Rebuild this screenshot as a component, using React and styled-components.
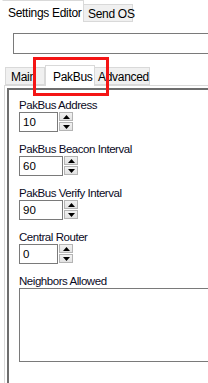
import React from "react";
import styled, { createGlobalStyle } from "styled-components";

const GlobalStyle = createGlobalStyle`
  html, body {
    margin: 0;
    padding: 0;
    background: #fff;
  }
  body {
    font-family: "Liberation Sans", Arial, sans-serif;
    font-size: 11px;
    color: #000;
  }
`;

const Window = styled.div`
  width: 208px;
  height: 383px;
  overflow: hidden;
  display: flex;
  flex-direction: column;
  background: #fff;
`;

const TopTabs = styled.div`
  display: flex;
  align-items: flex-end;
  height: 22px;
  padding-left: 2px;
  flex-shrink: 0;
`;

const TopTab = styled.div`
  box-sizing: border-box;
  width: ${(p) => p.$w}px;
  height: ${(p) => (p.$active ? 22 : 18)}px;
  display: flex;
  align-items: center;
  padding-left: ${(p) => (p.$active ? 5 : 4)}px;
  padding-top: ${(p) => (p.$active ? 2 : 1)}px;
  font-size: 12px;
  letter-spacing: -0.3px;
  white-space: nowrap;
  background: ${(p) => (p.$active ? "#fff" : "#f0f0f0")};
  border: 1px solid #d9d9d9;
  border-bottom: ${(p) => (p.$active ? "none" : "1px solid #d9d9d9")};
  border-left: ${(p) => (p.$active ? "1px solid #fff" : "none")};
`;

const PathRow = styled.div`
  padding: 11px 0 0 13px;
  flex-shrink: 0;
`;

const PathInput = styled.div`
  box-sizing: border-box;
  width: 230px;
  height: 21px;
  border: 1px solid #7a7a7a;
  background: #fff;
`;

const InnerTabs = styled.div`
  display: flex;
  align-items: flex-end;
  margin-top: 11px;
  margin-left: 4px;
  padding-left: 1px;
  height: 20px;
  border-bottom: 1px solid #d9d9d9;
  flex-shrink: 0;
`;

const InnerTab = styled.div`
  position: relative;
  box-sizing: border-box;
  width: ${(p) => p.$w}px;
  height: ${(p) => (p.$active ? 21 : 18)}px;
  margin-bottom: ${(p) => (p.$active ? -1 : 0)}px;
  display: flex;
  align-items: center;
  padding-left: ${(p) => p.$pad}px;
  padding-top: 1px;
  font-size: 12px;
  letter-spacing: -0.3px;
  white-space: nowrap;
  background: ${(p) => (p.$active ? "#fff" : "#f0f0f0")};
  border: 1px solid #d9d9d9;
  border-bottom: ${(p) => (p.$active ? "none" : "1px solid #d9d9d9")};
  border-left: ${(p) => (p.$first || p.$active ? "1px solid #d9d9d9" : "none")};
  z-index: ${(p) => (p.$active ? 1 : 0)};
`;

const Highlight = styled.div`
  position: absolute;
  left: -13px;
  top: -9px;
  width: 76px;
  height: 39px;
  box-sizing: border-box;
  border: 3px solid #f41515;
  pointer-events: none;
  z-index: 2;
`;

const TabPanel = styled.div`
  flex: 1;
  margin-left: 4px;
  border-left: 1px solid #d9d9d9;
  padding: 2px 0 0 2px;
  display: flex;
`;

const ScrollPanel = styled.div`
  flex: 1;
  border-left: 2px solid #6e6e6e;
  border-top: 2px solid #6e6e6e;
  padding: 9px 0 0 10px;
  display: flex;
  flex-direction: column;
  gap: 11px;
`;

const Field = styled.div`
  display: flex;
  flex-direction: column;
`;

const Label = styled.div`
  height: 13px;
  line-height: 13px;
  font-size: 11.5px;
  letter-spacing: -0.45px;
  color: #0a0a1e;
  white-space: nowrap;
`;

const SpinRow = styled.div`
  display: flex;
  gap: 1px;
`;

const NumberBox = styled.div`
  box-sizing: border-box;
  width: ${(p) => p.$w}px;
  height: 20px;
  border: 1px solid #7a7a7a;
  padding-left: 3px;
  line-height: 18px;
  font-size: 11.5px;
  background: #fff;
`;

const Spinner = styled.div`
  display: flex;
  flex-direction: column;
  gap: 1px;
  width: 14px;
`;

const SpinButton = styled.div`
  box-sizing: border-box;
  height: 9px;
  border: 1px solid #b4b4b4;
  background: linear-gradient(#f2f2f2, #e2e2e2);
  display: flex;
  align-items: center;
  justify-content: center;
`;

const ListBox = styled.div`
  box-sizing: border-box;
  width: 220px;
  height: 74px;
  border: 1px solid #7a7a7a;
  background: #fff;
`;

const Arrow = ({ up }) => (
  <svg width="7" height="4" viewBox="0 0 7 4">
    <polygon points={up ? "0,4 7,4 3.5,0" : "0,0 7,0 3.5,4"} fill="#000" />
  </svg>
);

const NumberField = ({ label, value, width }) => (
  <Field>
    <Label>{label}</Label>
    <SpinRow>
      <NumberBox $w={width}>{value}</NumberBox>
      <Spinner>
        <SpinButton>
          <Arrow up />
        </SpinButton>
        <SpinButton>
          <Arrow />
        </SpinButton>
      </Spinner>
    </SpinRow>
  </Field>
);

const fields = [
  { label: "PakBus Address", value: "10", width: 39 },
  { label: "PakBus Beacon Interval", value: "60", width: 44 },
  { label: "PakBus Verify Interval", value: "90", width: 44 },
  { label: "Central Router", value: "0", width: 39 },
];

export default function App() {
  return (
    <Window>
      <GlobalStyle />
      <TopTabs>
        <TopTab $active $w={82}>Settings Editor</TopTab>
        <TopTab $w={49}>Send OS</TopTab>
      </TopTabs>
      <PathRow>
        <PathInput />
      </PathRow>
      <InnerTabs>
        <InnerTab $first $w={40} $pad={5}>Main</InnerTab>
        <InnerTab $active $w={50} $pad={7}>
          PakBus
          <Highlight />
        </InnerTab>
        <InnerTab $w={55} $pad={3}>Advanced</InnerTab>
      </InnerTabs>
      <TabPanel>
        <ScrollPanel>
          {fields.map((f) => (
            <NumberField key={f.label} {...f} />
          ))}
          <Field>
            <Label>Neighbors Allowed</Label>
            <ListBox />
          </Field>
        </ScrollPanel>
      </TabPanel>
    </Window>
  );
}
